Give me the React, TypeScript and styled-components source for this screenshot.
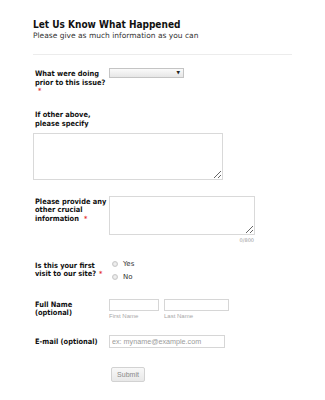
import React from "react";
import styled, { createGlobalStyle } from "styled-components";

const GlobalStyle = createGlobalStyle`
  html, body {
    margin: 0;
    padding: 0;
    background: #ffffff;
    font-family: "DejaVu Sans", Verdana, sans-serif;
  }
`;

const Page = styled.div`
  width: 325px;
  padding: 18px 33px 20px 33px;
  box-sizing: border-box;
`;

const Header = styled.header`
  padding-bottom: 13px;
  border-bottom: 1px solid #ececec;
  width: 259px;
`;

const Title = styled.h2`
  margin: 0;
  font-family: "DejaVu Sans Condensed", "DejaVu Sans", sans-serif;
  font-stretch: condensed;
  font-size: 10px;
  line-height: 13px;
  font-weight: bold;
  color: #111;
`;

const Subtitle = styled.div`
  font-size: 7.5px;
  line-height: 10px;
  color: #333;
`;

const Form = styled.form`
  display: flex;
  flex-direction: column;
  padding-top: 13px;
`;

const Row = styled.div<{ $top?: number; $stacked?: boolean }>`
  display: flex;
  flex-direction: ${(p) => (p.$stacked ? "column" : "row")};
  align-items: flex-start;
  margin-top: ${(p) => p.$top ?? 0}px;
`;

const Label = styled.label<{ $stacked?: boolean; $pad?: number }>`
  width: ${(p) => (p.$stacked ? "auto" : "74px")};
  flex: none;
  white-space: nowrap;
  padding-left: 2px;
  padding-top: ${(p) => p.$pad ?? 2}px;
  font-family: "DejaVu Sans Condensed", "DejaVu Sans", sans-serif;
  font-stretch: condensed;
  font-size: 7.4px;
  line-height: 8.7px;
  font-weight: bold;
  color: #111;
`;

const Req = styled.span<{ $gap?: number }>`
  color: #e53935;
  margin-left: ${(p) => p.$gap ?? 3}px;
  font-size: 7px;
`;

const Field = styled.div`
  display: flex;
  flex-direction: column;
`;

const SelectBox = styled.div`
  position: relative;
  width: 75px;
  height: 10px;
  box-sizing: border-box;
  border: 1px solid #c4c4c4;
  background: linear-gradient(#fafafa, #e6e6e6);
`;

const Arrow = styled.span`
  position: absolute;
  right: 3px;
  top: 0px;
  font-size: 4.5px;
  line-height: 8px;
  color: #222;
`;

const TextArea = styled.textarea<{ $w: number; $h: number }>`
  width: ${(p) => p.$w}px;
  height: ${(p) => p.$h}px;
  box-sizing: border-box;
  border: 1px solid #d9d9d9;
  border-radius: 0;
  margin: 0;
  padding: 2px;
  font-family: inherit;
  font-size: 7px;
`;

const Counter = styled.div`
  font-size: 5px;
  color: #999;
  text-align: right;
  margin-top: 2px;
  padding-right: 1px;
`;

const RadioList = styled.div`
  display: flex;
  flex-direction: column;
  gap: 4px;
  padding-left: 3px;
`;

const RadioItem = styled.label`
  display: flex;
  align-items: center;
  gap: 5px;
  font-size: 7px;
  line-height: 9px;
  color: #333;
`;

const Radio = styled.input`
  appearance: none;
  margin: 0;
  width: 6px;
  height: 6px;
  border-radius: 50%;
  border: 1px solid #c8c8c8;
  background: radial-gradient(#f4f4f4, #dcdcdc);
`;

const NameGrid = styled.div`
  display: flex;
  gap: 5px;
`;

const NamePart = styled.div`
  display: flex;
  flex-direction: column;
`;

const TextInput = styled.input<{ $w: number; $h?: number }>`
  width: ${(p) => p.$w}px;
  height: ${(p) => p.$h ?? 12}px;
  box-sizing: border-box;
  border: 1px solid #d6d6d6;
  margin: 0;
  padding: 0 2px;
  font-family: "Liberation Sans", Arial, sans-serif;
  font-size: 7.2px;
  color: #333;
  &::placeholder {
    color: #9a9a9a;
  }
`;

const SubLabel = styled.span`
  font-family: "Liberation Sans", Arial, sans-serif;
  font-size: 6px;
  color: #a8a8a8;
  margin-top: 2px;
`;

const SubmitRow = styled.div`
  padding-left: 78px;
  margin-top: 14px;
`;

const SubmitButton = styled.button`
  width: 34px;
  height: 15px;
  padding: 0;
  border: 1px solid #d2d2d2;
  border-radius: 2px;
  background: linear-gradient(#f8f8f8, #e8e8e8);
  font-family: "Liberation Sans", Arial, sans-serif;
  font-size: 7px;
  color: #888;
`;

export default function App() {
  return (
    <>
      <GlobalStyle />
      <Page>
        <Header>
          <Title>Let Us Know What Happened</Title>
          <Subtitle>Please give as much information as you can</Subtitle>
        </Header>
        <Form>
          <Row>
            <Label>
              What were doing
              <br />
              prior to this issue?
              <br />
              <Req>*</Req>
            </Label>
            <SelectBox>
              <Arrow>▼</Arrow>
            </SelectBox>
          </Row>

          <Row $stacked $top={13}>
            <Label $stacked>
              If other above,
              <br />
              please specify
            </Label>
            <TextArea $w={190} $h={47} style={{ marginTop: 4 }} />
          </Row>

          <Row $top={16}>
            <Label>
              Please provide any
              <br />
              other crucial
              <br />
              information<Req $gap={5}>*</Req>
            </Label>
            <Field>
              <TextArea $w={146} $h={39} />
              <Counter>0/800</Counter>
            </Field>
          </Row>

          <Row $top={17}>
            <Label>
              Is this your first
              <br />
              visit to our site?<Req>*</Req>
            </Label>
            <RadioList>
              <RadioItem>
                <Radio type="radio" name="first" />
                Yes
              </RadioItem>
              <RadioItem>
                <Radio type="radio" name="first" />
                No
              </RadioItem>
            </RadioList>
          </Row>

          <Row $top={17}>
            <Label>
              Full Name
              <br />
              (optional)
            </Label>
            <NameGrid>
              <NamePart>
                <TextInput $w={50} />
                <SubLabel>First Name</SubLabel>
              </NamePart>
              <NamePart>
                <TextInput $w={65} />
                <SubLabel>Last Name</SubLabel>
              </NamePart>
            </NameGrid>
          </Row>

          <Row $top={16}>
            <Label $pad={3}>E-mail (optional)</Label>
            <TextInput $w={116} $h={13} placeholder="ex: myname@example.com" />
          </Row>

          <SubmitRow>
            <SubmitButton type="button">Submit</SubmitButton>
          </SubmitRow>
        </Form>
      </Page>
    </>
  );
}
